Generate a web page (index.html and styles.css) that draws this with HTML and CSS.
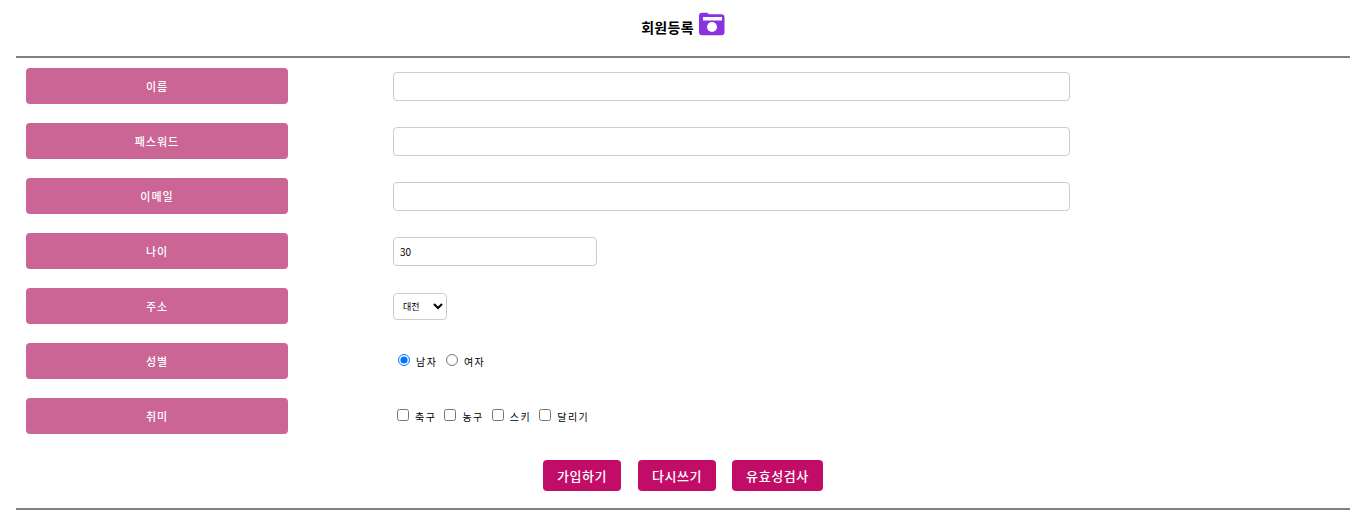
FILE: index.html
```html
<!DOCTYPE html>
<html lang="ko">
<head>
<meta charset="utf-8">
<title>회원등록</title>
<link rel="stylesheet" href="styles.css">
</head>
<body>
<div class="page">
  <h1 class="title"><span class="title-text">회원등록</span>
    <svg class="title-icon" viewBox="0 0 26 24" width="26" height="24" aria-hidden="true">
      <path d="M3 .8h5a1.500 1.500 0 0 1 1.500 1.500h13a3 3 0 0 1 3 3v15a3 3 0 0 1-3 3h-19.500a3 3 0 0 1-3-3v-16.500a3 3 0 0 1 3-3z" fill="#8b32e0"/>
      <rect x="4" y="5" width="19" height="3.500" fill="#fff"/>
      <circle cx="13" cy="15" r="5" fill="#fff"/>
    </svg>
  </h1>
  <hr class="rule">
  <form class="form">
    <div class="row"><label class="tag">이름</label><input class="field" type="text"></div>
    <div class="row"><label class="tag">패스워드</label><input class="field" type="password"></div>
    <div class="row"><label class="tag">이메일</label><input class="field" type="email"></div>
    <div class="row"><label class="tag">나이</label><input class="field field-short" type="number" value="30"></div>
    <div class="row"><label class="tag">주소</label>
      <select class="picker"><option>대전</option><option>서울</option><option>부산</option></select>
    </div>
    <div class="row"><label class="tag">성별</label>
      <div class="options">
        <input class="radio" type="radio" name="gender" id="m" checked><label class="opt" for="m">남자</label>
        <input class="radio" type="radio" name="gender" id="f"><label class="opt" for="f">여자</label>
      </div>
    </div>
    <div class="row"><label class="tag">취미</label>
      <div class="options checks">
        <input class="check" type="checkbox" id="h1"><label class="opt" for="h1">축구</label>
        <input class="check" type="checkbox" id="h2"><label class="opt" for="h2">농구</label>
        <input class="check" type="checkbox" id="h3"><label class="opt" for="h3">스키</label>
        <input class="check" type="checkbox" id="h4"><label class="opt" for="h4">달리기</label>
      </div>
    </div>
    <div class="actions">
      <button class="btn btn-a" type="submit">가입하기</button>
      <button class="btn btn-a" type="reset">다시쓰기</button>
      <button class="btn btn-b" type="button">유효성검사</button>
    </div>
  </form>
  <hr class="rule">
</div>
</body>
</html>
```
FILE: styles.css
```css
* { box-sizing: border-box; }
html, body { margin: 0; padding: 0; background: #fff; }
body {
  font-family: "Noto Sans CJK KR", "Noto Sans", sans-serif;
  color: #000;
  height: 518px;
  overflow: hidden;
}
.page { width: 1334px; margin-left: 16px; }
.title {
  display: flex;
  justify-content: center;
  align-items: center;
  gap: 5px;
  height: 56px;
  margin: 0;
  padding-bottom: 8px;
  font-size: 14px;
  font-weight: 700;
  letter-spacing: .3px;
}
.title-text { padding-top: 5px; }
.title-icon { flex: none; }
.rule { border: 0; height: 2px; background: #808080; margin: 0; }
.form { padding-top: 10px; }
.row {
  display: grid;
  grid-template-columns: 262px 1fr;
  column-gap: 105px;
  align-items: center;
  height: 36px;
  margin: 0 0 19px 10px;
}
.tag {
  display: flex;
  align-items: center;
  justify-content: center;
  height: 36px;
  background: #cb6595;
  color: #fff;
  border-radius: 4px;
  font-size: 11px;
  font-weight: 500;
  letter-spacing: 1px;
}
.field {
  width: 677px;
  height: 29px;
  padding: 0 6px;
  border: 1px solid #ccc;
  border-radius: 4px;
  background: #fff;
  font: 10px "Noto Sans CJK KR", sans-serif;
  outline: none;
}
.field-short { width: 204px; }
.picker {
  width: 54px;
  height: 27px;
  padding-left: 5px;
  border: 1px solid #ccc;
  border-radius: 4px;
  background: #fff;
  font: 9px "Noto Sans CJK KR", sans-serif;
}
.options { display: flex; align-items: center; font-size: 10px; letter-spacing: 1.5px; }
.opt { margin-right: 3.5px; padding-top: 1px; }
.radio { width: 12px; height: 12px; margin: 0 6px 2px 5px; flex: none; }
.check { width: 12px; height: 12px; margin: 0 6px 2px 4px; flex: none; }
.checks .opt { margin-right: 4px; }
.actions {
  display: flex;
  justify-content: center;
  gap: 17px;
  margin-top: 26px;
  margin-bottom: 17px;
}
.btn {
  height: 31px;
  padding: 0;
  border: 0;
  border-radius: 4px;
  background: #c20d68;
  color: #fff;
  font: 500 13px "Noto Sans CJK KR", sans-serif;
  letter-spacing: .6px;
}
.btn-a { width: 78px; }
.btn-b { width: 91px; margin-left: -1px; }
```
